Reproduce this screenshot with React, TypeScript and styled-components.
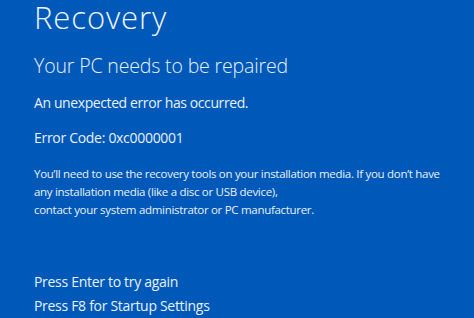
import React from "react";
import styled, { createGlobalStyle } from "styled-components";

const Global = createGlobalStyle`
  html, body { margin: 0; padding: 0; height: 100%; background: #0059b8; }
  #root { height: 100%; }
`;

const Screen = styled.main`
  box-sizing: border-box;
  height: 100vh;
  overflow: hidden;
  background: #0059b8;
  color: #e8f0fa;
  font-family: "Open Sans", "Noto Sans", sans-serif;
  padding: 0 0 0 34px;
  display: flex;
  flex-direction: column;
  white-space: nowrap;
`;

const Title = styled.h1`
  margin: 0;
  font-size: 31px;
  line-height: 34px;
  font-weight: 300;
  letter-spacing: 0.9px;
  color: #eef4fc;
`;

const Subtitle = styled.h2`
  margin: 19.5px 0 0;
  font-size: 19.5px;
  line-height: 24px;
  font-weight: 300;
  letter-spacing: -0.15px;
`;

const Line = styled.p<{ $gap: number; $track: number }>`
  margin: ${(p) => p.$gap}px 0 0;
  font-size: 14px;
  line-height: 20px;
  font-weight: 400;
  letter-spacing: ${(p) => p.$track}px;
`;

const Paragraph = styled.p`
  margin: 17px 0 0;
  font-size: 11.5px;
  line-height: 18px;
  letter-spacing: -0.3px;
`;

const Actions = styled.div`
  margin-top: 51px;
  display: flex;
  flex-direction: column;
`;

const Action = styled.span`
  font-size: 14px;
  line-height: 24px;
  letter-spacing: -0.3px;
`;

export default function App() {
  return (
    <>
      <Global />
      <Screen>
        <Title>Recovery</Title>
        <Subtitle>Your PC needs to be repaired</Subtitle>
        <Line $gap={15} $track={-0.4}>An unexpected error has occurred.</Line>
        <Line $gap={15} $track={-0.3}>Error Code: 0xc0000001</Line>
        <Paragraph>
          You’ll need to use the recovery tools on your installation media. If you don’t have
          <br />
          any installation media (like a disc or USB device),
          <br />
          contact your system administrator or PC manufacturer.
        </Paragraph>
        <Actions>
          <Action>Press Enter to try again</Action>
          <Action>Press F8 for Startup Settings</Action>
        </Actions>
      </Screen>
    </>
  );
}
